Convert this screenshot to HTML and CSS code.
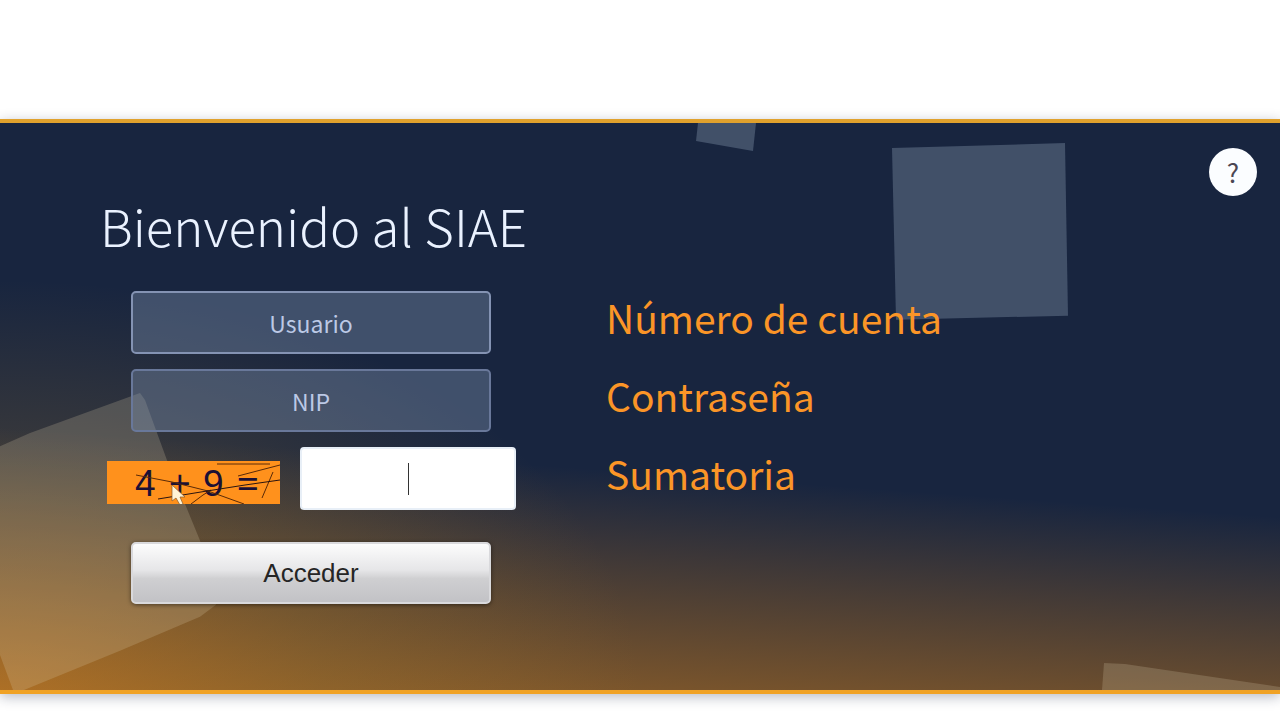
FILE: index.html
```
<!doctype html>
<html lang="es">
<head>
<meta charset="utf-8">
<title>SIAE</title>
<meta name="viewport" content="width=device-width, initial-scale=1.0">
<link rel="stylesheet" href="styles.css">
</head>

<body>

<main class="panel">
  <svg class="shapes" viewBox="0 0 1280 565" preserveAspectRatio="none" aria-hidden="true">
    <polygon points="0,322 30,309 140,269 145,276 167,336 200,416 216,480 200,492 120,526 24,565 13,565 0,530"></polygon>
    <polygon points="698,0 756,0 753,28 696,18"></polygon>
    <polygon points="892,25 1065,20 1068,192 896,196"></polygon>
    <polygon points="1104,538 1125,539 1280,562 1280,565 1102,565"></polygon>
  </svg>

  <button class="help" type="button" aria-label="Ayuda">?</button>

  <form class="login">
    <h1>Bienvenido al SIAE</h1>

    <input class="field" id="user" type="text" placeholder="Usuario">
    <label class="note" for="user">Número de cuenta</label>

    <input class="field" id="nip" type="password" placeholder="NIP">
    <label class="note" for="nip">Contraseña</label>

    <div class="captcha">
      <svg class="sum" width="173" height="43" viewBox="0 0 173 43">
        <rect width="173" height="43" fill="#ff911c"></rect>
        <g class="digits">
          <text x="28" y="35">4</text>
          <text x="62" y="35">+</text>
          <text x="96" y="35">9</text>
          <text x="130" y="35">=</text>
        </g>
        <g fill="none" stroke="#5a2a08">
          <path d="M110 3h53M29 14l36 7 36 9 36 13M131 15l42-11M166 11l-11 26M84 43l12-9 8-5"></path>
          <path d="M51 38l49-8 38-6 35-5" stroke="#2a1410"></path>
        </g>
        <path d="M65 24v16l4-3 4 7 3-1-3-7h5z" fill="#fff3d6" stroke="#8a5a28" stroke-width=".7"></path>
      </svg>
      <div class="answer">
        <input id="sum" type="text" autocomplete="off">
        <span class="caret"></span>
      </div>
    </div>
    <label class="note" for="sum">Sumatoria</label>

    <button class="submit" type="button">Acceder</button>
  </form>
</main>

</body>
</html>
```
FILE: styles.css
```
* {
  box-sizing: border-box;
}
body {
  margin: 0;
  padding: 119px 0 24px;
  background: #fff;
  font-family: "Noto Sans CJK SC", "Open Sans", sans-serif;
}
.panel {
  position: relative;
  overflow: hidden;
  min-height: 575px;
  border-top: 4px solid #e0a12d;
  border-bottom: 4px solid #f0a225;
  background:
    radial-gradient(ellipse 640px 410px at 0 100%, rgba(215, 135, 35, .42), rgba(170, 125, 45, .26) 50%, transparent),
    linear-gradient(184deg, transparent 60%, rgba(215, 130, 25, .62)),
    #18253f;
  box-shadow: 0 3px 12px rgba(20, 30, 60, .3);
}
.shapes {
  position: absolute;
  inset: 0;
  width: 100%;
  height: 100%;
  fill: rgba(195, 218, 240, .24);
}
.shapes polygon:first-child,
.shapes polygon:last-child {
  fill: rgba(220, 205, 175, .22);
}
.help {
  position: absolute;
  top: 25px;
  right: 23px;
  width: 48px;
  height: 48px;
  padding: 0;
  border: 0;
  border-radius: 50%;
  background: #fbfdff;
  color: #4b4653;
  font: 26px/48px "Noto Sans CJK SC", sans-serif;
}
.login {
  position: relative;
  display: grid;
  grid-template-columns: 422px 1fr;
  gap: 15px 84px;
  align-items: center;
  padding: 70px 24px 80px 100px;
}
h1 {
  grid-column: 1 / -1;
  margin: 0 0 19px;
  color: #eaf2ff;
  font-size: 51px;
  font-weight: 300;
  line-height: 64px;
}
.field {
  justify-self: center;
  width: 360px;
  height: 63px;
  padding: 0 12px;
  border: 2px solid #8493b3;
  border-radius: 5px;
  background: rgba(125, 145, 175, .4);
  color: #cbd8f3;
  font: 23px "Noto Sans CJK SC", sans-serif;
  text-align: center;
}
#nip {
  border-color: #69789a;
}
.field::placeholder {
  color: #bcc9e6;
  opacity: 1;
}
.note {
  padding-bottom: 12px;
  color: #fb9527;
  font-size: 39px;
  line-height: 48px;
}
.captcha {
  display: flex;
  justify-content: center;
  align-items: flex-end;
  gap: 20px;
}
.sum {
  margin-bottom: 6px;
}
.digits {
  fill: #1b1035;
  font: 37px "Liberation Sans", Arial, sans-serif;
}
.answer {
  position: relative;
}
.answer input {
  display: block;
  width: 216px;
  height: 63px;
  border: 2px solid #e8eff7;
  border-radius: 4px;
  background: #fff;
  font-size: 24px;
  text-align: center;
}
/* text cursor in the middle of the empty box */
.caret {
  position: absolute;
  top: 16px;
  left: 50%;
  width: 1px;
  height: 32px;
  background: #333;
}
.submit {
  justify-self: center;
  width: 360px;
  height: 62px;
  margin-top: 17px;
  border: 2px solid #d9d9dc;
  border-radius: 5px;
  background: linear-gradient(#fcfcfc, #e6e6e8 45%, #cfcfd1 60%, #c2c2c6);
  box-shadow: 0 1px 4px rgba(0, 0, 0, .5);
  color: #252525;
  font: 26px "Liberation Sans", Arial, sans-serif;
}
```
